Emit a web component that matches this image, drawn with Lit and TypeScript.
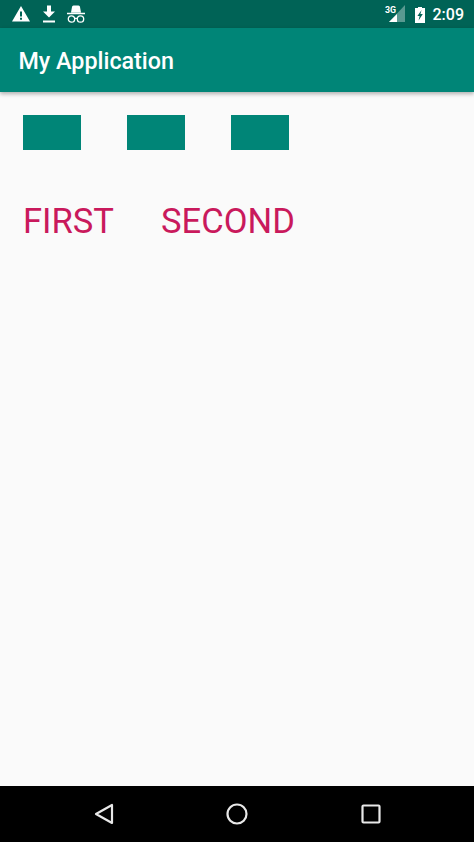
import { LitElement, html, css } from "lit";
import { customElement } from "lit/decorators.js";

@customElement("app-root")
export class AppRoot extends LitElement {
  static styles = css`
    :host {
      display: flex;
      flex-direction: column;
      width: 474px;
      height: 842px;
      overflow: hidden;
      background: #fafafa;
      font-family: Roboto, "Liberation Sans", sans-serif;
    }
    .status {
      height: 28px;
      flex: none;
      background: #006356;
      color: #fff;
      display: flex;
      align-items: center;
      justify-content: space-between;
      padding: 0 10px 0 12px;
    }
    .status-left { display: flex; align-items: center; gap: 12px; }
    .status-left svg + svg + svg { margin-left: -1px; }
    .status-right { display: flex; align-items: center; }
    .status svg { display: block; fill: #fff; overflow: visible; }
    .time { font-size: 16px; font-weight: 500; margin-left: 8px; }
    .battery { margin-left: 10px; margin-top: 2px; }
    .toolbar {
      height: 64px;
      flex: none;
      background: #008577;
      color: #fff;
      display: flex;
      align-items: center;
      padding: 2px 0 0 18.5px;
      box-sizing: border-box;
      font-size: 23.3px;
      font-weight: 500;
      box-shadow: 0 2px 4px rgba(0, 0, 0, 0.3);
      position: relative;
    }
    .content { flex: 1; padding: 23px 0 0 23px; }
    .blocks { display: flex; gap: 46px; }
    .block { width: 58px; height: 35px; background: #008577; }
    .labels {
      display: flex;
      gap: 47px;
      margin-top: 51px;
      color: #c9195c;
      font-size: 34.6px;
      line-height: 40px;
    }
    .nav {
      height: 56px;
      flex: none;
      background: #000;
      display: flex;
      align-items: center;
      justify-content: space-between;
      padding: 0 93px 0 94px;
    }
    .nav svg { display: block; fill: none; stroke: #e8e8e8; stroke-width: 2.2; }
    .nav .home { margin-left: -2px; }
  `;

  render() {
    return html`
      <div class="status">
        <div class="status-left">
          <svg width="18" height="16" viewBox="0 0 18 16">
            <path fill-rule="evenodd" d="M9 0 L18 15.5 H0 Z M8 5.5 V10.5 H10 V5.5 Z M8 11.8 V13.8 H10 V11.8 Z" />
          </svg>
          <svg width="14" height="18" viewBox="0 0 14 18">
            <path d="M5 0.5 H9 V6.5 H13 L7 12.5 L1 6.5 H5 Z M1 15.5 H13 V17.5 H1 Z" />
          </svg>
          <svg width="18" height="18" viewBox="0 0 18 18">
            <path d="M5 2 Q5 0.5 6.5 0.5 H11.5 Q13 0.5 13 2 L14 7.5 H4 Z M0 7.8 H18 V9.3 H0 Z" />
            <circle cx="4.5" cy="14" r="3.2" fill="none" stroke="#fff" stroke-width="1.3" />
            <circle cx="13.5" cy="14" r="3.2" fill="none" stroke="#fff" stroke-width="1.3" />
            <path d="M7.7 13.4 H10.3" fill="none" stroke="#fff" stroke-width="1.3" />
          </svg>
        </div>
        <div class="status-right">
          <svg width="20" height="20" viewBox="0 0 20 20">
            <path d="M20 1 V18 H4 Z" fill-opacity="0.35" />
            <path d="M12 10 V18 H4 Z" />
            <text x="0" y="9" font-size="8.8" font-weight="700" font-family="Roboto, sans-serif">3G</text>
          </svg>
          <svg class="battery" width="10" height="16" viewBox="0 0 10 16">
            <path fill-rule="evenodd" d="M3 0 H7 V1 H10 V16 H0 V1 H3 Z M6.6 3 L2.4 9 H4.6 L3.6 13.5 L7.8 7 H5.4 Z" />
          </svg>
          <span class="time">2:09</span>
        </div>
      </div>
      <div class="toolbar">My Application</div>
      <div class="content">
        <div class="blocks">
          <div class="block"></div>
          <div class="block"></div>
          <div class="block"></div>
        </div>
        <div class="labels"><span>FIRST</span><span>SECOND</span></div>
      </div>
      <div class="nav">
        <svg width="20" height="22" viewBox="0 0 20 22">
          <path d="M18 2 V20 L2 11 Z" stroke-linejoin="round" />
        </svg>
        <svg class="home" width="22" height="22" viewBox="0 0 22 22">
          <circle cx="11" cy="11" r="9.5" />
        </svg>
        <svg width="20" height="20" viewBox="0 0 20 20">
          <rect x="1.5" y="1.5" width="17" height="17" rx="1" />
        </svg>
      </div>
    `;
  }
}
